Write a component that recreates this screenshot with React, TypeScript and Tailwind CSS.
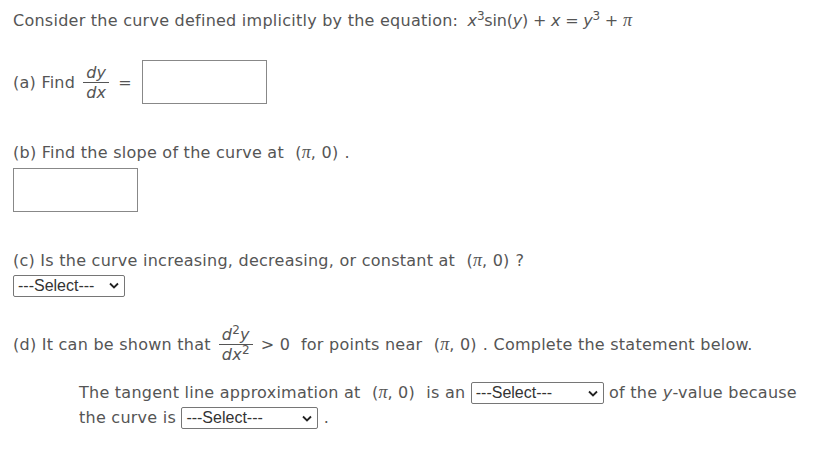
import { ReactNode } from 'react'

function Pi() {
  return <span className="italic font-['Liberation_Serif',serif] text-[18px] tracking-normal">π</span>
}

function Pt() {
  return (
    <span className="mx-[6px]">
      (<Pi />, 0)
    </span>
  )
}

function Frac({ top, bottom }: { top: ReactNode; bottom: ReactNode }) {
  return (
    <span className="inline-flex flex-col items-center align-middle mx-[8px] text-[16px] leading-[19px]">
      <span className="px-[3px] border-b border-[#555]">{top}</span>
      <span className="px-[3px]">{bottom}</span>
    </span>
  )
}

function Select({ width }: { width: string }) {
  return (
    <span
      className={`inline-flex items-center justify-between ${width} h-[22px] border border-[#767676] rounded-[2px] bg-white pl-[4px] pr-[5px] align-middle text-[16px] leading-[20px] tracking-normal text-[#333] font-['Liberation_Sans',Arial,sans-serif]`}
    >
      <span>---Select---</span>
      <svg width="10" height="7" viewBox="0 0 10 7" className="ml-1">
        <path d="M1 1.5 L5 5.5 L9 1.5" fill="none" stroke="#222" strokeWidth="1.8" />
      </svg>
    </span>
  )
}

export default function App() {
  return (
    <div className="w-[838px] h-[453px] bg-white text-[#555] text-[16px] leading-[21px] tracking-[0.25px] px-[13px] pt-[10px] font-['DejaVu_Sans',Verdana,sans-serif]">
      {/* Intro */}
      <p>
        Consider the curve defined implicitly by the equation:{' '}
        <span className="ml-[4px] tracking-[-0.2px]">
          <i>x</i>
          <sup className="text-[12px]">3</sup>sin(<i>y</i>) + <i>x</i> = <i>y</i>
          <sup className="text-[12px]">3</sup> + <Pi />
        </span>
      </p>

      {/* (a) */}
      <div className="flex items-center mt-[29px]">
        <span>(a) Find</span>
        <Frac top={<i>dy</i>} bottom={<i>dx</i>} />
        <span className="ml-[1px] mr-[10px]">=</span>
        <span className="inline-block w-[125px] h-[44px] border border-[#888] bg-white" />
      </div>

      {/* (b) */}
      <p className="mt-[38px]">
        (b) Find the slope of the curve at <Pt />.
      </p>
      <div className="mt-[5px] w-[125px] h-[44px] border border-[#888] bg-white" />

      {/* (c) */}
      <p className="mt-[38px]">
        (c) Is the curve increasing, decreasing, or constant at <Pt />?
      </p>
      <div className="mt-[3px]">
        <Select width="w-[112px]" />
      </div>

      {/* (d) */}
      <div className="flex items-center mt-[28px]">
        <span>(d) It can be shown that</span>
        <Frac
          top={
            <>
              <i>d</i>
              <sup className="text-[12px]">2</sup>
              <i>y</i>
            </>
          }
          bottom={
            <>
              <i>dx</i>
              <sup className="text-[12px]">2</sup>
            </>
          }
        />
        <span>
          &gt; 0 &nbsp;for points near <Pt />. Complete the statement below.
        </span>
      </div>

      <div className="pl-[66px] mt-[16px] leading-[25px]">
        <p>
          The tangent line approximation at <Pt /> is an <Select width="w-[133px]" /> of the <i>y</i>-value because
        </p>
        <p>
          the curve is <Select width="w-[137px]" /> .
        </p>
      </div>
    </div>
  )
}
